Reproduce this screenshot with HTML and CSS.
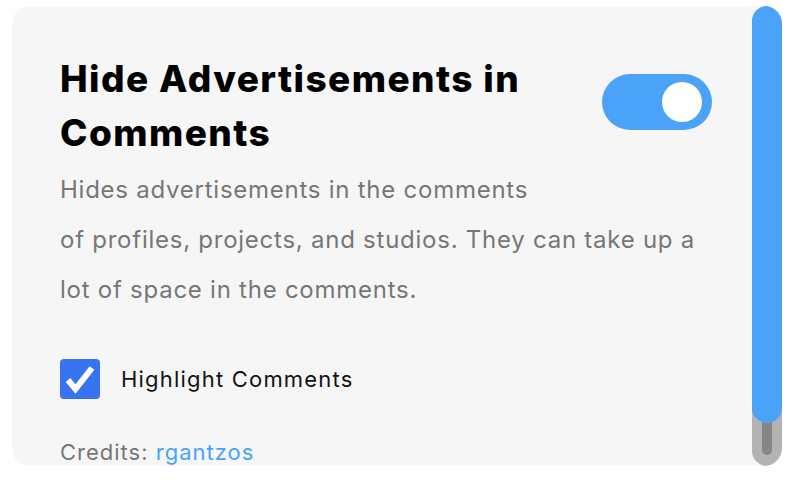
FILE: index.html
```html
<!DOCTYPE html>
<html lang="en">
<head>
    <meta charset="UTF-8">
    <meta name="viewport" content="width=device-width, initial-scale=1.0">
    <title>Hide Advertisements in Comments</title>
    <link rel="stylesheet" href="styles.css">
</head>
<body>
    <div class="card">
        <div class="feature-header">
            <h1 class="feature-title">Hide Advertisements in Comments</h1>
            <div class="toggle on"><span class="knob"></span></div>
        </div>

        <p class="feature-desc">Hides advertisements in the comments<br>of profiles, projects, and studios. They can take up a lot of space in the comments.</p>

        <label class="option">
            <span class="checkbox">
                <svg width="40" height="40" viewBox="0 0 40 40">
                    <path d="M8 21 L15.5 30 L32 9" fill="none" stroke="#fff" stroke-width="6"/>
                </svg>
            </span>
            <span class="option-label">Highlight Comments</span>
        </label>

        <div class="credits">Credits: <a href="#" class="credit-link">rgantzos</a></div>

        <!-- fake scrollbar drawn over the card -->
        <div class="scroll-track">
            <div class="scroll-groove"></div>
            <div class="scroll-thumb"></div>
        </div>
    </div>
</body>
</html>
```

FILE: styles.css
```css
body {
    margin: 0;
    background: #fff;
    font-family: Inter, "Noto Sans", sans-serif;
}
.card {
    position: relative;
    box-sizing: border-box;
    width: 770px;
    height: 460px;
    margin: 6px 0 0 12px;
    padding: 46px 70px 0 48px;
    background: #f6f6f6;
    border-radius: 18px;
    overflow: hidden;
}
.feature-header {
    display: flex;
    align-items: center;
    justify-content: space-between;
}
.feature-title {
    margin: 0;
    width: 510px;
    font-size: 37px;
    line-height: 54px;
    font-weight: 800;
    letter-spacing: 1.4px;
    color: #000;
}
.toggle {
    width: 110px;
    height: 56px;
    border-radius: 28px;
    background: #ccc;
    display: flex;
    align-items: center;
    justify-content: flex-end;
    padding: 0 10px;
    box-sizing: border-box;
    margin-top: -8px;
}
.toggle.on {
    background: #4ba3f8;
}
.knob {
    width: 40px;
    height: 40px;
    border-radius: 50%;
    background: #fff;
}
.feature-desc {
    margin: 5px 0 0;
    font-size: 24px;
    line-height: 50px;
    letter-spacing: 0.75px;
    color: #767676;
}
.option {
    display: flex;
    align-items: center;
    gap: 21px;
    margin-top: 44px;
}
.checkbox {
    width: 40px;
    height: 40px;
    border-radius: 4px;
    background: #3874f0;
    display: block;
}
.checkbox svg {
    display: block;
}
.option-label {
    font-size: 22px;
    letter-spacing: 1.2px;
    color: #111;
}
.credits {
    margin-top: 38px;
    font-size: 22px;
    line-height: 30px;
    letter-spacing: 1px;
    color: #777;
}
.credit-link {
    color: #4aa3f9;
    text-decoration: none;
}
.scroll-track {
    position: absolute;
    top: 0;
    right: 0;
    width: 30px;
    height: 460px;
    border-radius: 15px;
    background: #b3b3b3;
}
.scroll-groove {
    position: absolute;
    left: 10px;
    top: 14px;
    bottom: 11px;
    width: 10px;
    border-radius: 5px;
    background: #868686;
}
.scroll-thumb {
    position: absolute;
    top: 0;
    left: 0;
    width: 30px;
    height: 417px;
    border-radius: 15px;
    background: #4aa3f9;
}
```
